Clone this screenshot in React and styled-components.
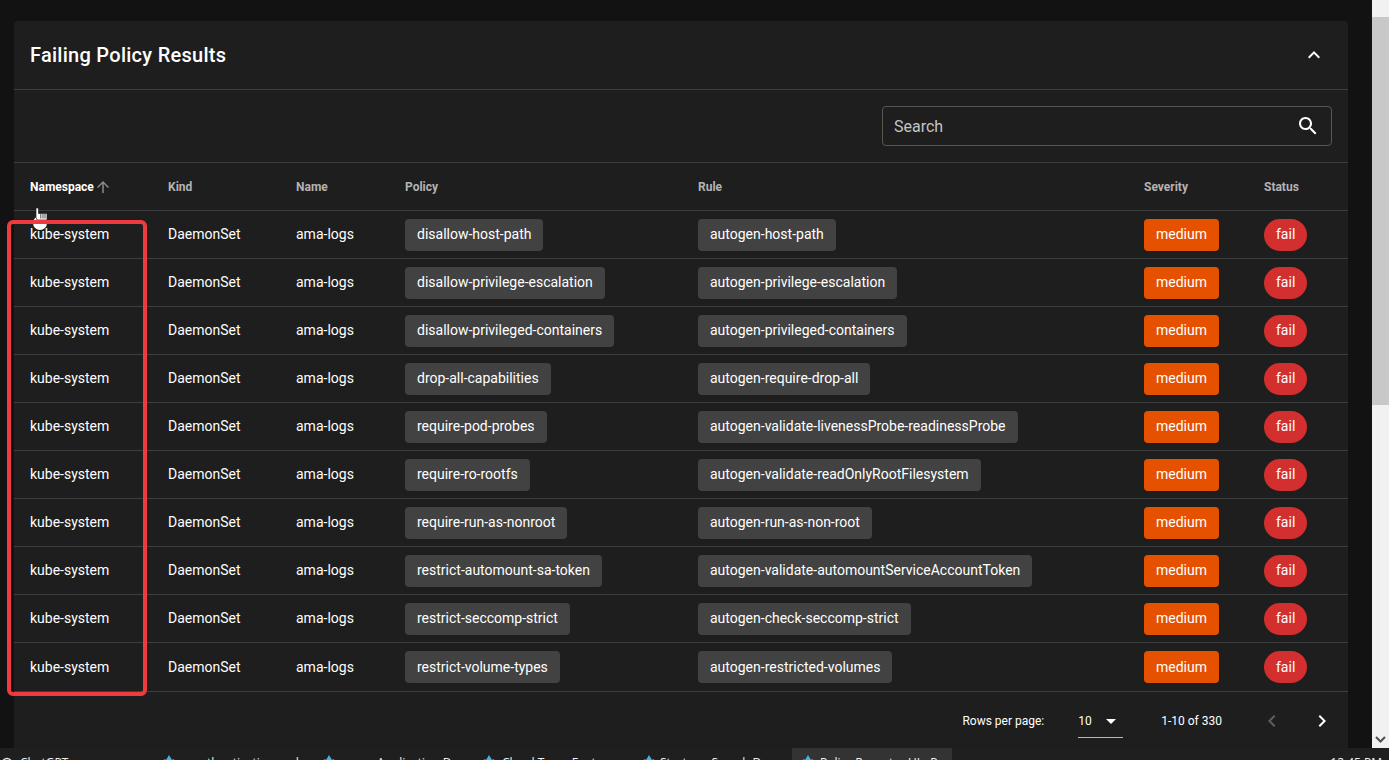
import React from "react";
import styled, { createGlobalStyle } from "styled-components";

const Global = createGlobalStyle`
  html, body {
    margin: 0;
    padding: 0;
    height: 100%;
    overflow: hidden;
    background: #121212;
  }
  * {
    box-sizing: border-box;
  }
`;

const Screen = styled.div`
  position: relative;
  width: 1389px;
  height: 760px;
  display: flex;
  flex-direction: column;
  overflow: hidden;
  font-family: Roboto, "Liberation Sans", sans-serif;
  color: #fff;
`;

const Viewport = styled.div`
  flex: 0 0 748px;
  display: flex;
  overflow: hidden;
`;

const Main = styled.main`
  flex: 1;
  padding: 21px 24px 0 14px;
  background: #121212;
`;

const Scrollbar = styled.div`
  flex: 0 0 17px;
  display: flex;
  flex-direction: column;
  background: #f1f1f1;
  padding-top: 17px;
`;

const Thumb = styled.div`
  height: 388px;
  background: #c8c8c8;
`;

const ScrollArrow = styled.svg`
  width: 17px;
  height: 17px;
  margin-top: auto;
  color: #505050;
`;

const Card = styled.section`
  height: 727px;
  background: #1e1e1e;
  border-radius: 4px 4px 0 0;
`;

const CardHeader = styled.header`
  height: 69px;
  padding: 0 22px 0 16px;
  display: flex;
  align-items: center;
  justify-content: space-between;
  border-bottom: 1px solid #3d3d3d;
`;

const Title = styled.h2`
  margin: 0;
  font-size: 20px;
  font-weight: 500;
  letter-spacing: 0.27px;
  line-height: 68px;
`;

const Icon = styled.svg`
  display: block;
  flex: none;
  width: ${props => props.$size || 24}px;
  height: ${props => props.$size || 24}px;
  fill: ${props => props.$color || "#fff"};
`;

const Toolbar = styled.div`
  height: 73px;
  padding: 16px;
  display: flex;
  justify-content: flex-end;
  border-bottom: 1px solid #3d3d3d;
`;

const Search = styled.label`
  width: 450px;
  height: 40px;
  padding: 0 11px;
  display: flex;
  align-items: center;
  border: 1px solid #575757;
  border-radius: 4px;
`;

const SearchInput = styled.input`
  flex: 1;
  min-width: 0;
  border: 0;
  outline: 0;
  padding: 0;
  background: transparent;
  color: #fff;
  font: 400 16px Roboto, "Liberation Sans", sans-serif;

  &::placeholder {
    color: #c4c4c4;
    opacity: 1;
  }
`;

const Table = styled.table`
  width: 100%;
  table-layout: fixed;
  border-collapse: separate;
  border-spacing: 0;
`;

const HeadCell = styled.th`
  height: 48px;
  padding: 0 16px;
  text-align: left;
  font-size: 12px;
  font-weight: 700;
  color: ${props => (props.$active ? "#fff" : "#b3b3b3")};
  border-bottom: 1px solid #3d3d3d;
`;

const SortLabel = styled.span`
  display: inline-flex;
  align-items: center;
`;

const Chip = styled.span`
  display: inline-flex;
  align-items: center;
  height: 32px;
  padding: 0 12px 2px;
  vertical-align: middle;
  font-size: 14px;
  color: #fff;
  background: ${props => props.$bg || "#424242"};
  border-radius: ${props => (props.$pill ? "16px" : "4px")};
`;

const Cell = styled.td`
  height: 48px;
  padding: 0 16px ${props => (props.$plain ? "2px" : "0")};
  font-size: 14px;
  color: #fff;
  white-space: nowrap;
  border-bottom: 1px solid #3d3d3d;
`;

const Row = styled.tr`
  &:last-child td {
    height: 49px;
    padding-bottom: 0;
  }

  &:last-child ${Chip} {
    padding-bottom: 0;
  }
`;

const Footer = styled.div`
  height: 58px;
  padding-right: 2px;
  display: flex;
  align-items: center;
  justify-content: flex-end;
  font-size: 12px;
`;

const RowsSelect = styled.div`
  width: 45px;
  height: 33px;
  margin: 0 38px 0 34px;
  display: flex;
  align-items: center;
  justify-content: space-between;
  border-bottom: 1px solid #b9b9b9;
`;

const PageCount = styled.span`
  margin-right: 26px;
`;

const PageButton = styled.button`
  width: 48px;
  height: 48px;
  padding: 12px;
  border: 0;
  background: transparent;

  & + & {
    margin-left: 2px;
  }
`;

const Taskbar = styled.footer`
  flex: 0 0 12px;
  display: flex;
  background: #1f1f1f;
  overflow: hidden;
  font: 400 12px "Open Sans", "Liberation Sans", sans-serif;
`;

const Tab = styled.div`
  flex: 0 0 ${props => props.$width || 160}px;
  height: 24px;
  padding: 6px 0 0 ${props => props.$pad || 2}px;
  display: flex;
  align-items: flex-start;
  white-space: nowrap;
  color: #f2f2f2;
  background: ${props => (props.$active ? "#333" : "transparent")};
`;

const TabIcon = styled.svg`
  flex: none;
  width: 14px;
  height: 14px;
  margin: 1px ${props => props.$gap}px 0 0;
`;

const Clock = styled.div`
  margin-left: auto;
  padding: 6px 7px 0 0;
  color: #f2f2f2;
`;

const Highlight = styled.div`
  position: absolute;
  left: 7px;
  top: 220px;
  width: 140px;
  height: 476px;
  border: 4px solid #f03a3d;
  border-radius: 6px;
  pointer-events: none;
`;

const Pointer = styled.svg`
  position: absolute;
  left: 32px;
  top: 206px;
  width: 18px;
  height: 26px;
`;

const RULES = [
  ["disallow-host-path", "autogen-host-path"],
  ["disallow-privilege-escalation", "autogen-privilege-escalation"],
  ["disallow-privileged-containers", "autogen-privileged-containers"],
  ["drop-all-capabilities", "autogen-require-drop-all"],
  ["require-pod-probes", "autogen-validate-livenessProbe-readinessProbe"],
  ["require-ro-rootfs", "autogen-validate-readOnlyRootFilesystem"],
  ["require-run-as-nonroot", "autogen-run-as-non-root"],
  ["restrict-automount-sa-token", "autogen-validate-automountServiceAccountToken"],
  ["restrict-seccomp-strict", "autogen-check-seccomp-strict"],
  ["restrict-volume-types", "autogen-restricted-volumes"]
];

const COLUMNS = [
  ["Namespace", 138],
  ["Kind", 128],
  ["Name", 109],
  ["Policy", 293],
  ["Rule", 446],
  ["Severity", 120],
  ["Status", 100]
];

const TABS = [
  { label: "ChatGPT", gap: 4, chat: true },
  { label: "authentication and", gap: 17 },
  { label: "Application D", gap: 41 },
  { label: "Cloud Team Feat", gap: 6 },
  { label: "Startup - Search D", gap: 4, width: 152 },
  { label: "Policy Reporter UI - P", gap: 5, active: true, pad: 9 }
];

const Glyph = ({ d, ...rest }) => (
  <Icon viewBox="0 0 24 24" {...rest}>
    <path d={d} />
  </Icon>
);

const App = () => (
  <Screen>
    <Global />
    <Viewport>
      <Main>
        <Card>
          <CardHeader>
            <Title>Failing Policy Results</Title>
            <Glyph d="M12 8l-6 6 1.41 1.41L12 10.83l4.59 4.58L18 14z" />
          </CardHeader>
          <Toolbar>
            <Search>
              <SearchInput placeholder="Search" readOnly />
              <Glyph d="M15.5 14h-.79l-.28-.27C15.41 12.59 16 11.11 16 9.5 16 5.91 13.09 3 9.5 3S3 5.91 3 9.5 5.91 16 9.5 16c1.61 0 3.09-.59 4.23-1.57l.27.28v.79l5 4.99L20.49 19l-4.99-5zm-6 0C7.01 14 5 11.99 5 9.5S7.01 5 9.5 5 14 7.01 14 9.5 11.99 14 9.5 14z" />
            </Search>
          </Toolbar>
          <Table>
            <colgroup>
              {COLUMNS.map(([name, width]) => (
                <col key={name} width={width} />
              ))}
            </colgroup>
            <thead>
              <tr>
                {COLUMNS.map(([name], i) => (
                  <HeadCell key={name} $active={i === 0}>
                    {i === 0 ? (
                      <SortLabel>
                        {name}
                        <Glyph
                          $size={18}
                          $color="#8a8a8a"
                          d="M4 12l1.41 1.41L11 7.83V20h2V7.83l5.58 5.59L20 12l-8-8-8 8z"
                        />
                      </SortLabel>
                    ) : (
                      name
                    )}
                  </HeadCell>
                ))}
              </tr>
            </thead>
            <tbody>
              {RULES.map(([policy, rule]) => (
                <Row key={policy}>
                  <Cell $plain>kube-system</Cell>
                  <Cell $plain>DaemonSet</Cell>
                  <Cell $plain>ama-logs</Cell>
                  <Cell>
                    <Chip>{policy}</Chip>
                  </Cell>
                  <Cell>
                    <Chip>{rule}</Chip>
                  </Cell>
                  <Cell>
                    <Chip $bg="#e65100">medium</Chip>
                  </Cell>
                  <Cell>
                    <Chip $bg="#d32f2f" $pill>
                      fail
                    </Chip>
                  </Cell>
                </Row>
              ))}
            </tbody>
          </Table>
          <Footer>
            <span>Rows per page:</span>
            <RowsSelect>
              <span>10</span>
              <Glyph $size={24} d="M7 10l5 5 5-5z" />
            </RowsSelect>
            <PageCount>1-10 of 330</PageCount>
            <PageButton aria-label="Previous page">
              <Glyph $color="#5f5f5f" d="M15.41 7.41L14 6l-6 6 6 6 1.41-1.41L10.83 12z" />
            </PageButton>
            <PageButton aria-label="Next page">
              <Glyph d="M10 6L8.59 7.41 13.17 12l-4.58 4.59L10 18l6-6z" />
            </PageButton>
          </Footer>
        </Card>
      </Main>
      <Scrollbar>
        <Thumb />
        <ScrollArrow viewBox="0 0 17 17" fill="none" stroke="currentColor" strokeWidth="2">
          <path d="M4 6l4.5 4.5L13 6" />
        </ScrollArrow>
      </Scrollbar>
    </Viewport>
    <Taskbar>
      {TABS.map(tab => (
        <Tab key={tab.label} $active={tab.active} $width={tab.width} $pad={tab.pad}>
          <TabIcon viewBox="0 0 14 14" $gap={tab.gap}>
            {tab.chat ? (
              <circle cx="5" cy="8" r="4.5" fill="none" stroke="#e8e8e8" strokeWidth="1.4" />
            ) : (
              <path d="M0 6l3-2 1 1 3-5 3 5 1-1 3 2-2 6H2z" fill="#35b8ea" />
            )}
          </TabIcon>
          {tab.label}
        </Tab>
      ))}
      <Clock>12:45 PM</Clock>
    </Taskbar>
    <Pointer viewBox="0 0 18 26">
      <circle cx="8" cy="17" r="7" fill="#fff" />
      <path
        d="M4 2h2.5v5.5H15V14H5.2L4 11.5z"
        fill="#fff"
        stroke="#222"
        strokeWidth="0.7"
      />
      <path d="M8.8 8v4.5M11 8v4.5M13 8v4.5" stroke="#222" strokeWidth="0.8" />
    </Pointer>
    <Highlight />
  </Screen>
);

export default App;
